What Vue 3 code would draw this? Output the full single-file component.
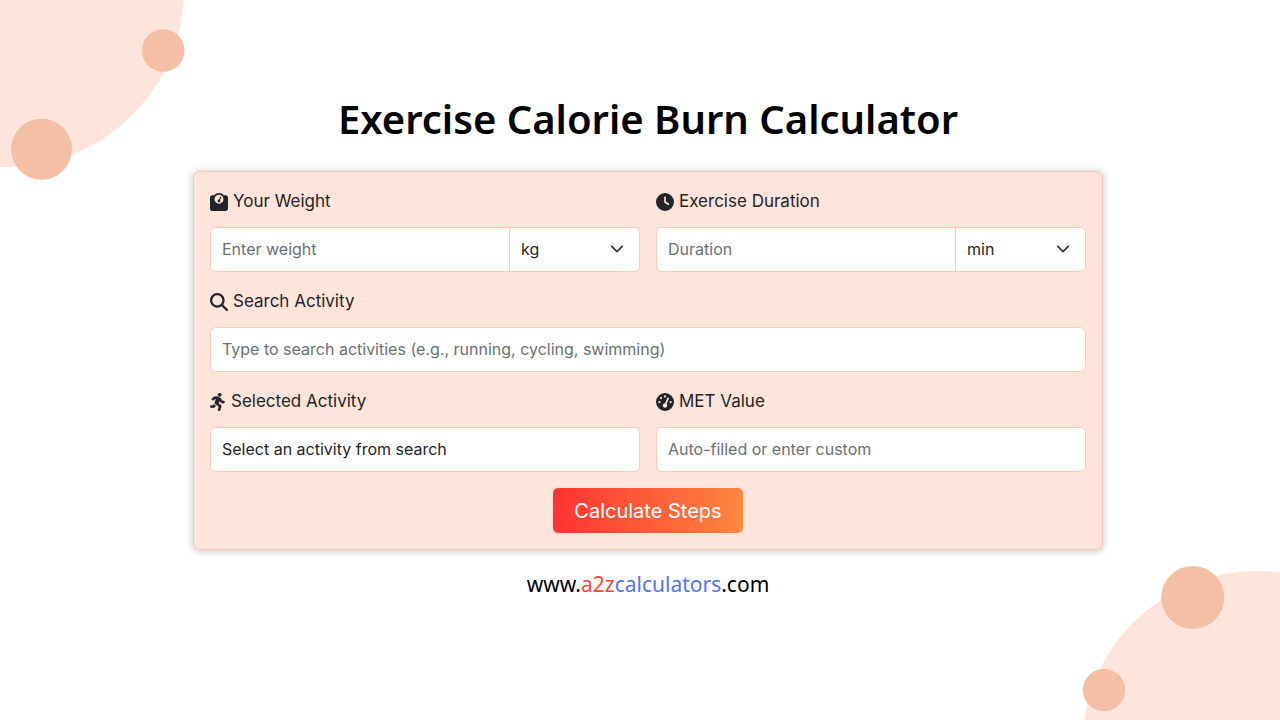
<script setup>
import { ref } from 'vue'

const weight = ref('')
const weightUnit = ref('kg')
const duration = ref('')
const durationUnit = ref('min')
const query = ref('')
const activity = ref('Select an activity from search')
const met = ref('')
</script>

<template>
  <div class="page">
    <svg class="decor decor-top" width="190" height="190" viewBox="0 0 190 190" aria-hidden="true">
      <circle class="pale" cx="7" cy="-10" r="177" />
      <circle class="peach" cx="163.200" cy="50.500" r="21.300" />
      <circle class="peach" cx="41.500" cy="149.200" r="30.500" />
    </svg>
    <svg class="decor decor-bottom" width="200" height="160" viewBox="1080 560 200 160" aria-hidden="true">
      <circle class="pale" cx="1257" cy="745.500" r="174.500" />
      <circle class="peach" cx="1192.800" cy="597.400" r="31.500" />
      <circle class="peach" cx="1104" cy="690" r="21.200" />
    </svg>

    <main class="content">
      <h1>Exercise Calorie Burn Calculator</h1>

      <form class="card" @submit.prevent>
        <div class="field">
          <label for="weight">
            <svg class="icon" viewBox="0 0 512 512" aria-hidden="true"><path d="M128 176a128 128 0 1 1 256 0 128 128 0 1 1 -256 0zM391.800 64C359.500 24.900 310.700 0 256 0S152.500 24.900 120.200 64H64C28.700 64 0 92.700 0 128V448c0 35.300 28.700 64 64 64H448c35.300 0 64-28.700 64-64V128c0-35.300-28.700-64-64-64H391.800zM296 224c0-10.600-4.100-20.200-10.900-27.400l33.600-78.300c3.500-8.100-.3-17.500-8.400-21s-17.500 .3-21 8.400L255.700 184c-22 .1-39.700 18-39.700 40c0 22.100 17.900 40 40 40s40-17.900 40-40z" /></svg>
            Your Weight
          </label>
          <div class="group">
            <input id="weight" v-model="weight" type="text" inputmode="decimal" placeholder="Enter weight" />
            <div class="unit">
              <select v-model="weightUnit" aria-label="Weight unit">
                <option>kg</option>
                <option>lbs</option>
              </select>
              <svg class="chevron" viewBox="0 0 16 16" aria-hidden="true"><path d="M2 5l6 6 6-6" /></svg>
            </div>
          </div>
        </div>

        <div class="field">
          <label for="duration">
            <svg class="icon" viewBox="0 0 512 512" aria-hidden="true"><path d="M256 0a256 256 0 1 1 0 512A256 256 0 1 1 256 0zM232 120V256c0 8 4 15.500 10.700 20l96 64c11 7.400 25.900 4.400 33.300-6.700s4.400-25.900-6.700-33.300L280 243.200V120c0-13.300-10.700-24-24-24s-24 10.700-24 24z" /></svg>
            Exercise Duration
          </label>
          <div class="group">
            <input id="duration" v-model="duration" type="text" inputmode="decimal" placeholder="Duration" />
            <div class="unit">
              <select v-model="durationUnit" aria-label="Duration unit">
                <option>min</option>
                <option>hr</option>
              </select>
              <svg class="chevron" viewBox="0 0 16 16" aria-hidden="true"><path d="M2 5l6 6 6-6" /></svg>
            </div>
          </div>
        </div>

        <div class="field wide">
          <label for="search">
            <svg class="icon" viewBox="0 0 512 512" aria-hidden="true"><path d="M416 208c0 45.900-14.900 88.300-40 122.700L502.600 457.400c12.500 12.500 12.500 32.800 0 45.300s-32.800 12.500-45.300 0L330.700 376c-34.400 25.200-76.800 40-122.700 40C93.100 416 0 322.900 0 208S93.100 0 208 0S416 93.100 416 208zM208 352a144 144 0 1 0 0-288 144 144 0 1 0 0 288z" /></svg>
            Search Activity
          </label>
          <div class="group">
            <input id="search" v-model="query" type="text" placeholder="Type to search activities (e.g., running, cycling, swimming)" />
          </div>
        </div>

        <div class="field">
          <label for="activity">
            <svg class="icon narrow" viewBox="0 0 448 512" aria-hidden="true"><path d="M320 48a48 48 0 1 0 -96 0 48 48 0 1 0 96 0zM125.700 175.500c9.900-9.900 23.400-15.500 37.500-15.500c1.900 0 3.800 .1 5.600 .3L137.600 254c-9.300 28 1.700 58.800 26.800 74.500l86.200 53.900-25.400 88.800c-4.900 17 5 34.700 22 39.600s34.700-5 39.600-22l28.700-100.400c5.900-20.600-2.600-42.600-20.700-53.900L238 299l30.900-82.400 5.100 12.300C289 264.700 323.900 288 362.700 288H384c17.700 0 32-14.300 32-32s-14.300-32-32-32H362.700c-12.900 0-24.600-7.800-29.500-19.700l-6.300-15c-14.600-35.100-44.100-61.900-80.500-73.100l-48.700-15c-11.100-3.400-22.700-5.200-34.400-5.200c-31 0-60.800 12.300-82.700 34.300L57.400 153.400c-12.500 12.500-12.500 32.800 0 45.300s32.800 12.500 45.300 0l23.100-23.100zM91.200 352H32c-17.700 0-32 14.300-32 32s14.300 32 32 32h69.600c19 0 36.200-11.200 43.900-28.500L157 361.600l-9.500-6c-17.500-10.900-30.500-26.800-37.900-44.900L91.200 352z" /></svg>
            Selected Activity
          </label>
          <div class="group">
            <input id="activity" v-model="activity" type="text" readonly />
          </div>
        </div>

        <div class="field">
          <label for="met">
            <svg class="icon" viewBox="0 0 512 512" aria-hidden="true"><path d="M0 256a256 256 0 1 1 512 0A256 256 0 1 1 0 256zM288 96a32 32 0 1 0 -64 0 32 32 0 1 0 64 0zM256 416c35.300 0 64-28.700 64-64c0-17.400-6.900-33.100-18.100-44.600L366 161.700c5.300-12.100-.2-26.300-12.300-31.600s-26.300 .2-31.600 12.300L257.900 288c-.6 0-1.300 0-1.900 0c-35.300 0-64 28.700-64 64s28.700 64 64 64zM176 144a32 32 0 1 0 -64 0 32 32 0 1 0 64 0zM96 288a32 32 0 1 0 0-64 32 32 0 1 0 0 64zm352-32a32 32 0 1 0 -64 0 32 32 0 1 0 64 0z" /></svg>
            MET Value
          </label>
          <div class="group">
            <input id="met" v-model="met" type="text" placeholder="Auto-filled or enter custom" />
          </div>
        </div>

        <button type="submit">Calculate Steps</button>
      </form>

      <a class="site" href="#">www.<span class="red">a2z</span><span class="blue">calculators</span>.com</a>
    </main>
  </div>
</template>

<style>
body {
  background: #fff;
}
</style>

<style scoped>
.page {
  position: relative;
  box-sizing: border-box;
  min-height: 100vh;
  padding: 91px 0 32px 16px;
  overflow: hidden;
  font-family: Inter, "Liberation Sans", sans-serif;
  color: #212529;
}
.decor {
  position: absolute;
}
.decor-top {
  top: 0;
  left: 0;
}
.decor-bottom {
  right: 0;
  bottom: 0;
}
.pale {
  fill: #fee4da;
}
.peach {
  fill: #f4bfa5;
}
.content {
  position: relative;
  display: flex;
  flex-direction: column;
  align-items: center;
}
h1 {
  margin: 0 0 24px;
  font: 600 40px/56px "Noto Sans", "Open Sans", sans-serif;
  color: #000;
  text-align: center;
}
.card {
  box-sizing: border-box;
  width: 72%;
  max-width: 910px;
  display: grid;
  grid-template-columns: 1fr 1fr;
  gap: 16px;
  padding: 16px;
  background: #ffe4db;
  border: 1px solid #ffc5ad;
  border-radius: 6px;
  box-shadow: 0 1px 8px rgba(0, 0, 0, 0.24);
}
.field {
  display: flex;
  flex-direction: column;
  gap: 12px;
  min-width: 0;
}
.wide {
  grid-column: 1 / -1;
}
label {
  display: flex;
  align-items: center;
  gap: 5px;
  font-size: 17px;
  line-height: 27px;
}
.icon {
  width: 18px;
  height: 18px;
  fill: #212529;
}
.narrow {
  width: 16px;
  stroke: #212529;
  stroke-width: 12;
}
.group {
  display: flex;
  box-sizing: border-box;
  height: 45px;
  background: #fff;
  border: 1px solid #ffcab5;
  border-radius: 6px;
  overflow: hidden;
}
input,
select {
  box-sizing: border-box;
  min-width: 0;
  width: 100%;
  height: 100%;
  margin: 0;
  padding: 0 11px 1px;
  border: 0;
  background: transparent;
  font: 400 16px/24px Inter, "Liberation Sans", sans-serif;
  color: #212529;
}
input {
  flex: 1;
}
input::placeholder {
  color: #6b7075;
  opacity: 1;
}
.unit {
  position: relative;
  box-sizing: border-box;
  flex: 0 0 130px;
  border-left: 1px solid #ffcab5;
}
select {
  appearance: none;
}
.chevron {
  position: absolute;
  top: 14px;
  right: 15px;
  width: 14px;
  height: 14px;
  fill: none;
  stroke: #343a40;
  stroke-width: 2;
  stroke-linecap: round;
  stroke-linejoin: round;
  pointer-events: none;
}
button {
  grid-column: 1 / -1;
  justify-self: center;
  height: 45px;
  padding: 0 21px;
  border: 0;
  border-radius: 5px;
  background: linear-gradient(90deg, #ff3333, #ff8640);
  color: #fff;
  font: 400 20px/30px Inter, "Liberation Sans", sans-serif;
}
.site {
  margin-top: 19px;
  font: 400 21px/30px "Noto Sans", "Open Sans", sans-serif;
  color: #000;
  text-decoration: none;
}
.red {
  color: #ff4438;
}
.blue {
  color: #5271ff;
}
</style>
